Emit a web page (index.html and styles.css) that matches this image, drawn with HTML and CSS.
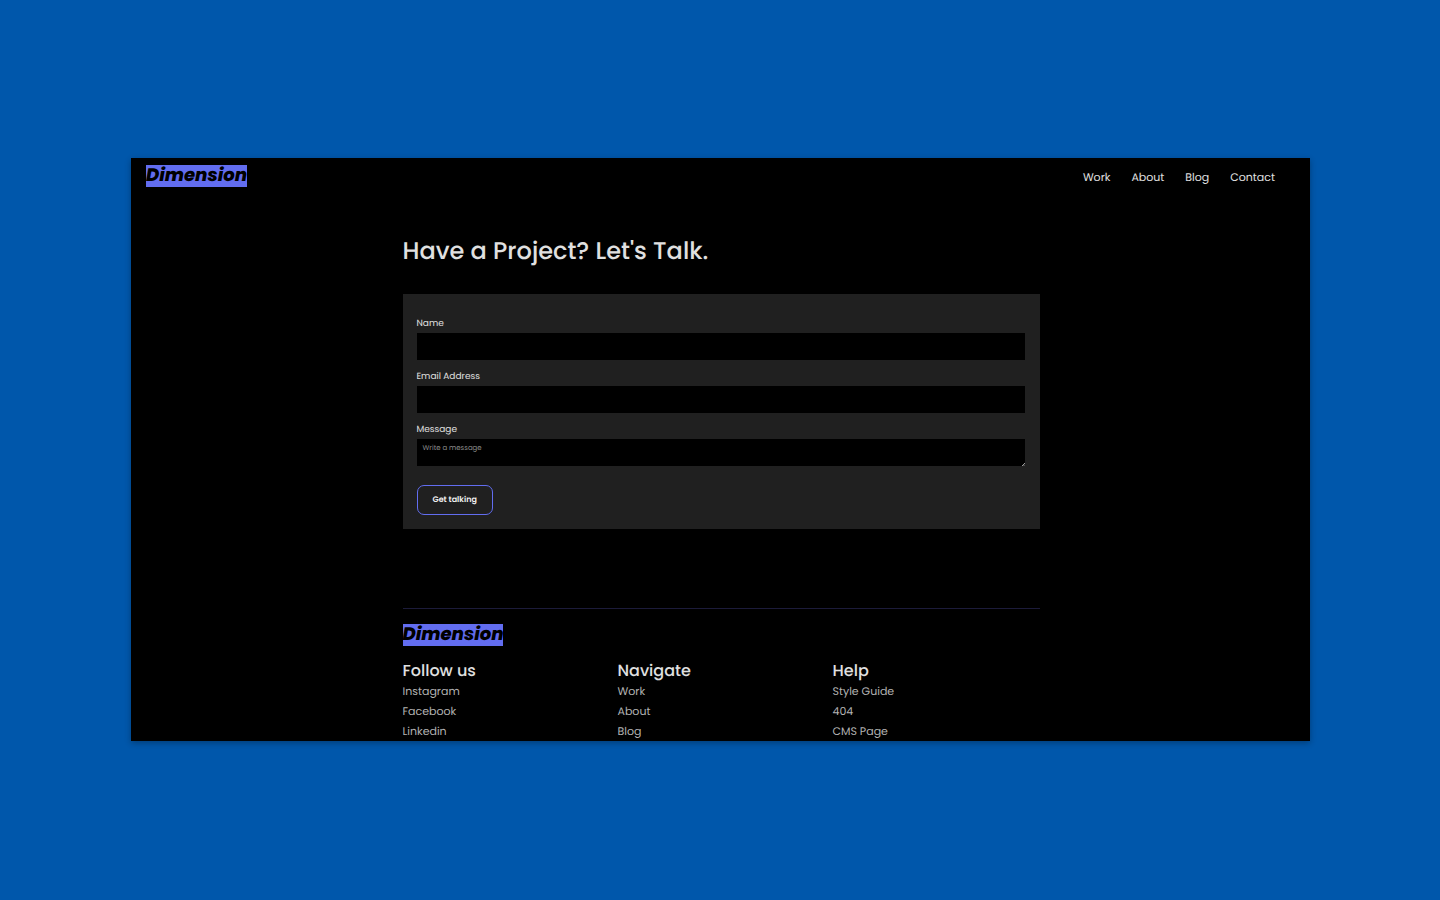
FILE: index.html
```html
<!DOCTYPE html>
<html lang="en">
<head>
<meta charset="utf-8">
<meta name="viewport" content="width=device-width, initial-scale=1">
<title>Dimension – Contact</title>
<link rel="stylesheet" href="styles.css">
</head>
<body>
<div class="window">
  <header class="header">
    <a class="logo" href="#">Dimension</a>
    <nav class="nav">
      <a href="#">Work</a>
      <a href="#">About</a>
      <a href="#">Blog</a>
      <a href="#">Contact</a>
    </nav>
  </header>
  <main class="container">
    <h1 class="title">Have a Project? Let's Talk.</h1>
    <form class="form">
      <div class="field">
        <label for="name">Name</label>
        <input class="control" id="name" type="text">
      </div>
      <div class="field">
        <label for="email">Email Address</label>
        <input class="control" id="email" type="email">
      </div>
      <div class="field">
        <label for="message">Message</label>
        <div class="area">
          <textarea class="control" id="message" placeholder="Write a message"></textarea>
          <svg class="grip" viewBox="0 0 4 4" aria-hidden="true"><path d="M1 4L4 1M2.5 4L4 2.5" stroke="#999" stroke-width="1"/></svg>
        </div>
      </div>
      <button class="submit" type="button">Get talking</button>
    </form>
  </main>
  <footer class="container footer">
    <a class="logo" href="#">Dimension</a>
    <div class="columns">
      <section class="column">
        <h2>Follow us</h2>
        <a href="#">Instagram</a>
        <a href="#">Facebook</a>
        <a href="#">Linkedin</a>
      </section>
      <section class="column">
        <h2>Navigate</h2>
        <a href="#">Work</a>
        <a href="#">About</a>
        <a href="#">Blog</a>
      </section>
      <section class="column">
        <h2>Help</h2>
        <a href="#">Style Guide</a>
        <a href="#">404</a>
        <a href="#">CMS Page</a>
      </section>
    </div>
  </footer>
</div>
</body>
</html>
```
FILE: styles.css
```css
* { box-sizing: border-box; }
body {
  margin: 0;
  padding: 158px 130px 158px 131px;
  background: #0057ab;
  color: #e0e0e0;
  font-family: Poppins, Inter, "Open Sans", sans-serif;
  text-rendering: geometricPrecision;
}
a { color: inherit; text-decoration: none; }
.window {
  padding-left: 1px;
  background: #000;
  box-shadow: 0 2px 6px rgba(0, 0, 0, 0.3);
}
.header {
  display: flex;
  justify-content: space-between;
  align-items: flex-start;
  padding: 7px 35px 9px 14px;
}
.logo {
  display: block;
  width: fit-content;
  background: #626df0;
  color: #000;
  font-size: 18px;
  font-style: italic;
  font-weight: 800;
  line-height: 22px;
}
.nav {
  display: flex;
  gap: 21px;
  padding-top: 2px;
  font-size: 11px;
  line-height: 20px;
}
.container {
  width: 100%;
  max-width: 637px;
  margin: 0 auto;
}
.title {
  margin: 0;
  padding: 41px 0 27px;
  font-size: 24px;
  font-weight: 500;
  line-height: 30px;
}
.form {
  padding: 23px 15px 14px 14px;
  background: #202020;
}
.field { margin-bottom: 10px; }
.field label {
  display: block;
  margin-bottom: 2px;
  font-size: 9px;
  line-height: 14px;
}
.control {
  display: block;
  width: 100%;
  height: 27px;
  padding: 5px 6px;
  border: 0;
  border-radius: 0;
  background: #000;
  color: #e0e0e0;
  font: 7px/10px Poppins, Inter, "Open Sans", sans-serif;
  text-rendering: inherit;
  resize: none;
}
.control::placeholder { color: #8c8c8c; }
.area { position: relative; }
.grip {
  position: absolute;
  right: 0;
  bottom: 0;
  width: 4px;
  height: 4px;
}
.submit {
  display: block;
  height: 30px;
  margin-top: 19px;
  padding: 0 15px;
  border: 1px solid #626df0;
  border-radius: 7px;
  background: transparent;
  color: #f0f0f0;
  font: 600 8px/12px Poppins, Inter, "Open Sans", sans-serif;
  text-rendering: inherit;
}
.footer {
  margin-top: 79px;
  padding-top: 15px;
  border-top: 1px solid #1c1b3a;
}
.columns {
  display: grid;
  grid-template-columns: repeat(3, 1fr);
  gap: 8px;
  padding-top: 14px;
}
.column h2 {
  margin: 0;
  font-size: 16px;
  font-weight: 500;
  line-height: 21px;
}
.column a {
  display: block;
  color: #b3b3b3;
  font-size: 11px;
  line-height: 20px;
}
```
